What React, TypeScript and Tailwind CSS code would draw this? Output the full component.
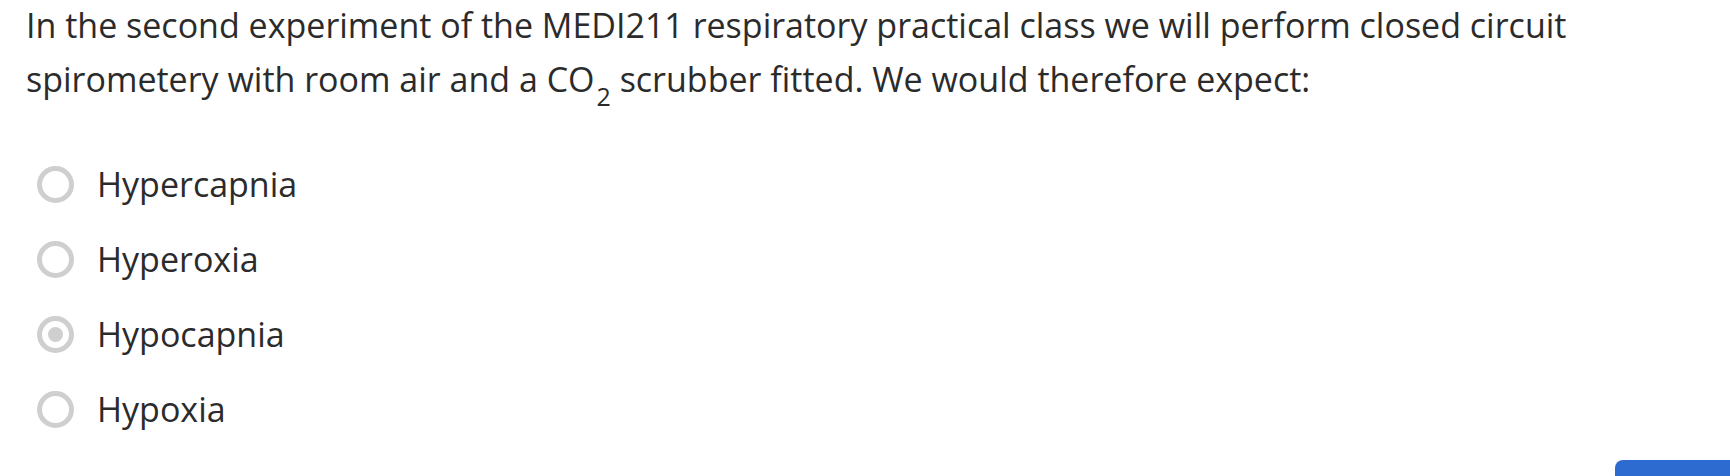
import { useState } from "react";

const answers = ["Hypercapnia", "Hyperoxia", "Hypocapnia", "Hypoxia"];

const Radio = ({ checked }: { checked: boolean }) => (
    <span className="flex items-center justify-center w-[37px] h-[37px] rounded-full border-[5px] border-[#cfcfcf] bg-white shrink-0">
        {checked && <span className="w-[15px] h-[15px] rounded-full bg-[#cfcfcf]"></span>}
    </span>
);

const App = () => {
    const [picked, setPicked] = useState("Hypocapnia");
    return (
        <div className="relative w-[1730px] h-[476px] overflow-hidden bg-white text-[#2b2b2b]" style={{ fontFamily: '"Open Sans", sans-serif' }}>
            <p className="pl-[26px] w-[1620px] text-[34px] leading-[54px] -mt-[2px]">
                In the second experiment of the MEDI211 respiratory practical class we will perform closed circuit spirometery with room air and a CO<sub className="text-[25px] align-[-8px] leading-none ml-[2px]">2</sub> scrubber fitted. We would therefore expect:
            </p>
            <div className="flex flex-col pl-[37px] mt-[54px] gap-[27px]">
                {answers.map(a => (
                    <label key={a} className="flex items-center gap-[23px] h-[48px] cursor-pointer" onClick={() => setPicked(a)}>
                        <Radio checked={picked === a} />
                        <span className="text-[34px] leading-[48px]">{a}</span>
                    </label>
                ))}
            </div>
            <button className="absolute left-[1615px] top-[460px] w-[160px] h-[50px] rounded-[8px] bg-[#2d6bd0]"></button>
        </div>
    );
};

export default App;
